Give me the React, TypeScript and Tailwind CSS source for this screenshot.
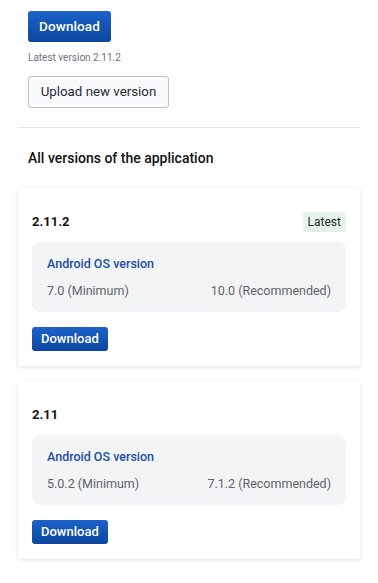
import React from "react";

const font = { fontFamily: "Roboto, 'Noto Sans', sans-serif" };

function VersionCard({ version, latest, min, rec }: { version: string; latest?: boolean; min: string; rec: string }) {
  return (
    <div className="rounded-[3px] bg-white shadow-[0_1px_4px_rgba(0,0,0,0.12)] px-[14px] pt-[24px] pb-[15px]">
      <div className="flex h-[20px] items-center justify-between">
        <span className="text-[13px] font-bold text-[#111]">{version}</span>
        {latest && (
          <span className="rounded-[3px] bg-[#e6f4e8] px-[5px] h-[20px] leading-[20px] text-[12px] text-[#1f2d1f]">Latest</span>
        )}
      </div>
      <div className="mt-[10px] h-[70px] rounded-[8px] bg-[#f3f4f6] px-[15px] pt-[14px]">
        <div className="text-[12.5px] font-medium leading-[16px] text-[#1d4ea6]">Android OS version</div>
        <div className="mt-[11px] flex justify-between text-[12.5px] leading-[16px] text-[#5f6368]">
          <span>{min}</span>
          <span>{rec}</span>
        </div>
      </div>
      <button className="mt-[15px] h-[24px] rounded-[3px] bg-gradient-to-b from-[#1d62c9] to-[#0b479d] px-[9px] text-[13px] font-medium text-white">
        Download
      </button>
    </div>
  );
}

export default function App() {
  return (
    <div className="min-h-[583px] w-[378px] bg-white" style={font}>
      <div className="px-[18px] pt-[11px]">
        <div className="px-[10px]">
          <button className="h-[31px] w-[83px] rounded-[3px] bg-gradient-to-b from-[#1d62c9] to-[#0b479d] text-[13.5px] font-medium tracking-[0.1px] text-white">
            Download
          </button>
          <div className="mt-[10px] text-[10px] leading-[12px] text-[#6b7280]">Latest version 2.11.2</div>
          <button className="mt-[12px] h-[32px] w-[141px] rounded-[3px] border border-[#b8c2cc] bg-[#f9fafb] text-[13.3px] text-[#1f2937]">
            Upload new version
          </button>
        </div>
        <div className="mt-[19px] h-px bg-[#e5e7eb]" />
        <div className="px-[10px] pt-[21px] pb-[21px] text-[14px] font-medium leading-[18px] text-[#111]">
          All versions of the application
        </div>
        <div className="flex flex-col gap-[15px]">
          <VersionCard version="2.11.2" latest min="7.0 (Minimum)" rec="10.0 (Recommended)" />
          <VersionCard version="2.11" min="5.0.2 (Minimum)" rec="7.1.2 (Recommended)" />
        </div>
      </div>
    </div>
  );
}
